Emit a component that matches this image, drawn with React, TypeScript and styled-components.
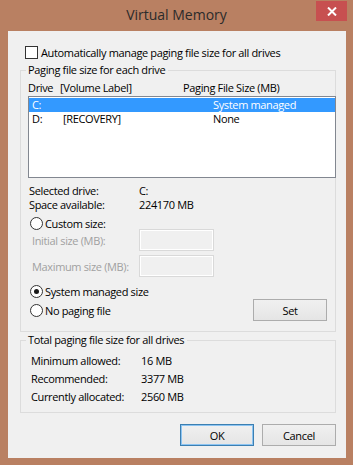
import * as React from 'react';
import styled, { createGlobalStyle } from 'styled-components';

const GlobalStyle = createGlobalStyle`
  html, body {
    margin: 0;
    padding: 0;
    background: #b98062;
  }
  body {
    font-family: 'Open Sans', 'Noto Sans', sans-serif;
    font-size: 11px;
    letter-spacing: -0.35px;
    color: #000;
    white-space: nowrap;
  }
`;

const Frame = styled.div`
  width: 353px;
  height: 465px;
  display: flex;
  flex-direction: column;
  background: #b98062;
  box-sizing: border-box;
`;

const TitleBar = styled.div`
  height: 31px;
  display: grid;
  grid-template-columns: 1fr auto 1fr;
  align-items: start;
`;

const Title = styled.div`
  grid-column: 2;
  font-size: 14px;
  line-height: 30px;
  color: #2b2b2b;
  letter-spacing: 0;
`;

const CloseButton = styled.div`
  grid-column: 3;
  justify-self: end;
  width: 31px;
  height: 20px;
  margin: 1px 6px 0 0;
  background: #c75050;
  display: flex;
  align-items: center;
  justify-content: center;
`;

const Client = styled.div`
  flex: 1;
  margin: 0 7px 7px 8px;
  background: #f0f0f0;
  padding: 0 10px 0 12px;
  display: flex;
  flex-direction: column;
`;

const CheckRow = styled.label`
  display: flex;
  align-items: center;
  gap: 3px;
  height: 16px;
  margin: 13px 0 0 5px;
`;

const CheckBox = styled.span`
  width: 11px;
  height: 11px;
  border: 1px solid #333;
  background: #fff;
`;

const Group = styled.fieldset<{ $top: number; $bottom: number }>`
  margin: ${(p) => p.$top}px 0 0 0;
  padding: 0 0 ${(p) => p.$bottom}px 0;
  border: 1px solid #dcdcdc;
  border-radius: 0;
  min-width: 0;
`;

const Legend = styled.legend`
  margin-left: 5px;
  padding: 0 3px 0 2px;
  line-height: 16px;
`;

const HeaderRow = styled.div`
  display: grid;
  grid-template-columns: 32px 123px 1fr;
  line-height: 15px;
  margin: 2px 0 0 7px;
`;

const ListBox = styled.div`
  width: 306px;
  height: 79px;
  margin: 1px 0 0 7px;
  border: 1px solid #828790;
  background: #fff;
  padding-top: 1px;
`;

const ListRow = styled.div<{ $selected?: boolean }>`
  display: grid;
  grid-template-columns: 31px 150px 1fr;
  height: 14px;
  line-height: 14px;
  padding-left: 3px;
  background: ${(p) => (p.$selected ? '#3399ff' : 'transparent')};
  color: ${(p) => (p.$selected ? '#fff' : '#000')};
`;

const InfoGrid = styled.div<{ $row: number; $left: number; $top: number }>`
  display: grid;
  grid-template-columns: 110px 1fr;
  grid-auto-rows: ${(p) => p.$row}px;
  align-items: center;
  margin: ${(p) => p.$top}px 0 0 ${(p) => p.$left}px;
`;

const RadioRow = styled.label<{ $top: number }>`
  display: flex;
  align-items: center;
  gap: 2px;
  height: 14px;
  margin: ${(p) => p.$top}px 0 0 9px;
`;

const RadioCircle = styled.span<{ $checked?: boolean }>`
  width: 11px;
  height: 11px;
  border: 1px solid #333;
  border-radius: 50%;
  background: #fff;
  display: flex;
  align-items: center;
  justify-content: center;
  &::after {
    content: '';
    width: 5px;
    height: 5px;
    border-radius: 50%;
    background: ${(p) => (p.$checked ? '#1a1a1a' : 'transparent')};
  }
`;

const SizeFields = styled.div`
  display: grid;
  grid-template-columns: 107px 75px;
  grid-auto-rows: 22px;
  row-gap: 4px;
  align-items: center;
  margin: -1px 0 0 11px;
`;

const DisabledLabel = styled.span`
  color: #a0a0a0;
`;

const SizeInput = styled.div`
  height: 22px;
  box-sizing: border-box;
  border: 1px solid #d9d9d9;
  box-shadow: inset 0 0 0 1px #fff;
  background: #f0f0f0;
`;

const SetRow = styled.div`
  display: flex;
  align-items: center;
  height: 22px;
  margin-top: 1px;
`;

const Button = styled.div<{ $default?: boolean }>`
  width: 74px;
  height: 22px;
  box-sizing: border-box;
  border: 1px solid ${(p) => (p.$default ? '#3c7fb1' : '#acacac')};
  background: linear-gradient(#f0f0f0, #e5e5e5);
  display: flex;
  align-items: center;
  justify-content: center;
  box-shadow: ${(p) => (p.$default ? 'inset 0 0 0 1px #8cc4f2' : 'none')};
`;

const SetButton = styled(Button)`
  margin: 0 8px 0 auto;
`;

const ButtonBar = styled.div`
  display: flex;
  justify-content: flex-end;
  gap: 8px;
  margin-top: 11px;
`;

const App: React.FC = () => {
  return (
    <Frame>
      <GlobalStyle />
      <TitleBar>
        <Title>Virtual Memory</Title>
        <CloseButton>
          <svg width="10" height="9" viewBox="0 0 10 9">
            <path d="M1 0.5 L9 8.5 M9 0.5 L1 8.5" stroke="#fff" strokeWidth="2" />
          </svg>
        </CloseButton>
      </TitleBar>
      <Client>
        <CheckRow>
          <CheckBox />
          Automatically manage paging file size for all drives
        </CheckRow>

        <Group $top={2} $bottom={10}>
          <Legend>Paging file size for each drive</Legend>
          <HeaderRow>
            <span>Drive</span>
            <span>[Volume Label]</span>
            <span>Paging File Size (MB)</span>
          </HeaderRow>
          <ListBox>
            <ListRow $selected>
              <span>C:</span>
              <span></span>
              <span>System managed</span>
            </ListRow>
            <ListRow>
              <span>D:</span>
              <span>[RECOVERY]</span>
              <span>None</span>
            </ListRow>
          </ListBox>
          <InfoGrid $row={14} $left={8} $top={5}>
            <span>Selected drive:</span>
            <span>C:</span>
            <span>Space available:</span>
            <span>224170 MB</span>
          </InfoGrid>
          <RadioRow $top={5}>
            <RadioCircle />
            Custom size:
          </RadioRow>
          <SizeFields>
            <DisabledLabel>Initial size (MB):</DisabledLabel>
            <SizeInput />
            <DisabledLabel>Maximum size (MB):</DisabledLabel>
            <SizeInput />
          </SizeFields>
          <RadioRow $top={7}>
            <RadioCircle $checked />
            System managed size
          </RadioRow>
          <SetRow>
            <RadioRow $top={0}>
              <RadioCircle />
              No paging file
            </RadioRow>
            <SetButton>Set</SetButton>
          </SetRow>
        </Group>

        <Group $top={0} $bottom={7}>
          <Legend>Total paging file size for all drives</Legend>
          <InfoGrid $row={18} $left={10} $top={3}>
            <span>Minimum allowed:</span>
            <span>16 MB</span>
            <span>Recommended:</span>
            <span>3377 MB</span>
            <span>Currently allocated:</span>
            <span>2560 MB</span>
          </InfoGrid>
        </Group>

        <ButtonBar>
          <Button $default>OK</Button>
          <Button>Cancel</Button>
        </ButtonBar>
      </Client>
    </Frame>
  );
};

export default App;
